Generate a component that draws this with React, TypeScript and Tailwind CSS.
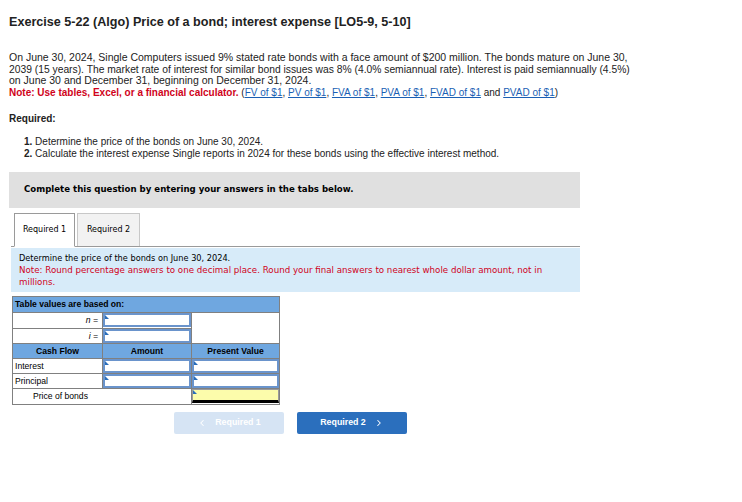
import { ChevronLeft, ChevronRight } from 'lucide-react';

const SANS = "font-['Liberation_Sans',Arial,sans-serif]";
const VERD = "font-['DejaVu_Sans',Verdana,sans-serif]";

const LINKS = ['FV of $1', 'PV of $1', 'FVA of $1', 'PVA of $1', 'FVAD of $1'];

function Link({ children }: { children: React.ReactNode }) {
	return <a className="text-[#1a5fb4] underline">{children}</a>;
}

function InputCell({ yellow = false }: { yellow?: boolean }) {
	return (
		<div
			className={
				yellow
					? 'relative h-[14px] border border-[#9a9a9a] border-b-[3px] border-b-black bg-[#fcfcab]'
					: 'relative h-[14px] border-2 border-[#6a94cc] bg-white'
			}
		>
			<span className="absolute left-0 top-0 h-0 w-0 border-l-[4px] border-t-[4px] border-l-[#2a6ebb] border-t-transparent" />
		</div>
	);
}

export default function App() {
	return (
		<div className={`${SANS} min-h-[502px] w-[742px] bg-white px-[9px] pt-[14px] text-[#222]`}>
			<h1 className="text-[12.6px] font-bold leading-[16px] text-[#222]">
				Exercise 5-22 (Algo) Price of a bond; interest expense [LO5-9, 5-10]
			</h1>

			<div className="mt-[22px] whitespace-nowrap leading-[11.6px]">
				<p className="text-[10.5px]">
					On June 30, 2024, Single Computers issued 9% stated rate bonds with a face amount of $200 million. The bonds mature on June 30,
					<br />
					<span className="text-[10.3px]">
						2039 (15 years). The market rate of interest for similar bond issues was 8% (4.0% semiannual rate). Interest is paid semiannually (4.5%)
					</span>
					<br />
					on June 30 and December 31, beginning on December 31, 2024.
				</p>
				<p className="text-[10px]">
					<span className="font-bold text-[#d0021b]">Note: Use tables, Excel, or a financial calculator.</span> (
					{LINKS.map((l, i) => (
						<span key={l}>
							<Link>{l}</Link>
							{i < LINKS.length - 1 ? ', ' : ''}
						</span>
					))}{' '}
					and <Link>PVAD of $1</Link>)
				</p>
			</div>

			<p className="mt-[15px] text-[10px] font-bold leading-[12px]">Required:</p>
			<ol className="mt-[11px] pl-[15px] text-[10px] leading-[11.6px]">
				<li>
					<b>1.</b> Determine the price of the bonds on June 30, 2024.
				</li>
				<li>
					<b>2.</b> Calculate the interest expense Single reports in 2024 for these bonds using the effective interest method.
				</li>
			</ol>

			<div className={`${VERD} mt-[12px] flex h-[36px] w-[571px] items-center bg-[#e0e0e0] pl-[15px] text-[8.6px] font-bold text-black`}>
				Complete this question by entering your answers in the tabs below.
			</div>

			<div className={`${VERD} ml-[2px] mt-[5px] w-[569px]`}>
				<div className="flex items-end border-b border-[#9a9a9a] pl-[3px]">
					<div className="-mb-px flex h-[34px] w-[61px] items-center justify-center border border-b-white border-[#9a9a9a] bg-white text-[8px] text-black">
						Required 1
					</div>
					<div className="ml-[2px] flex h-[33px] w-[63px] items-center justify-center border border-b-0 border-[#c8c8c8] bg-[#f2f2f2] text-[8px] text-black">
						Required 2
					</div>
				</div>

				<div className="mt-[1px] bg-[#d7ebf9] px-[8px] pb-[4px] pt-[4px] leading-[12px]">
					<p className="text-[8.2px] text-black">Determine the price of the bonds on June 30, 2024.</p>
					<p className="text-[8.7px] text-[#d0021b]">
						Note: Round percentage answers to one decimal place. Round your final answers to nearest whole dollar amount, not in
						<br />
						millions.
					</p>
				</div>
			</div>

			<table className="ml-[3px] mt-[4px] w-[267px] table-fixed border-collapse text-[8.6px] leading-[10px] text-black">
				<colgroup>
					<col className="w-[90px]" />
					<col className="w-[89px]" />
					<col className="w-[88px]" />
				</colgroup>
				<tbody>
					<tr className="h-[16px] bg-[#6fa7e0]">
						<td colSpan={3} className="border border-[#808080] px-[2px] font-bold">
							Table values are based on:
						</td>
					</tr>
					<tr className="h-[16px]">
						<td className="border border-[#808080] pr-[4px] text-right italic">n =</td>
						<td className="border border-[#808080] p-0">
							<InputCell />
						</td>
						<td rowSpan={2} className="border border-[#808080]" />
					</tr>
					<tr className="h-[15px]">
						<td className="border border-[#808080] pr-[4px] text-right italic">i =</td>
						<td className="border border-[#808080] p-0">
							<InputCell />
						</td>
					</tr>
					<tr className="h-[15px] bg-[#6fa7e0] font-bold">
						<td className="border border-[#808080] text-center">Cash Flow</td>
						<td className="border border-[#808080] text-center">Amount</td>
						<td className="border border-[#808080] text-center">Present Value</td>
					</tr>
					{['Interest', 'Principal'].map((r) => (
						<tr key={r} className="h-[15px]">
							<td className="border border-[#808080] px-[2px]">{r}</td>
							<td className="border border-[#808080] p-0">
								<InputCell />
							</td>
							<td className="border border-[#808080] p-0">
								<InputCell />
							</td>
						</tr>
					))}
					<tr className="h-[16px]">
						<td colSpan={2} className="border border-[#808080] pl-[20px]">
							Price of bonds
						</td>
						<td className="border border-[#808080] p-0">
							<InputCell yellow />
						</td>
					</tr>
				</tbody>
			</table>

			<div className="ml-[165px] mt-[7px] flex gap-[13px] text-[8.8px] font-bold text-white">
				<button className="flex h-[22px] w-[110px] items-center justify-center gap-[8px] rounded-[2px] bg-[#d6e4f4]">
					<ChevronLeft size={10} strokeWidth={2.5} />
					Required 1
				</button>
				<button className="flex h-[22px] w-[110px] items-center justify-center gap-[8px] rounded-[2px] bg-[#2b6fbd]">
					Required 2
					<ChevronRight size={10} strokeWidth={2.5} />
				</button>
			</div>
		</div>
	);
}
